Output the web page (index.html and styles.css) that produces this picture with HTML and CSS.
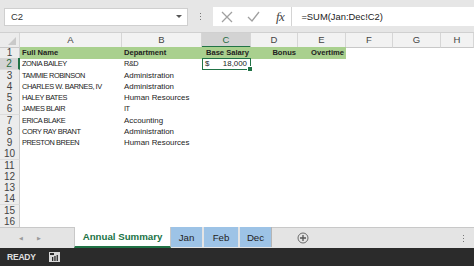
FILE: index.html
```html
<!DOCTYPE html>
<html>
<head>
<meta charset="utf-8">
<link rel="stylesheet" href="styles.css">
</head>
<body>
<div class="app">
  <div class="fbar">
    <div class="namebox"><span class="nb-text">C2</span><span class="nb-arrow"></span></div>
    <div class="vdots"><i></i><i></i><i></i></div>
    <div class="formula">
      <svg class="ic-x" width="12" height="12" viewBox="0 0 12 12"><path d="M1 1 L11 11 M11 1 L1 11" stroke="#a0a0a0" stroke-width="1.3" fill="none"/></svg>
      <svg class="ic-check" width="13" height="11" viewBox="0 0 13 11"><path d="M1 6 L5 10 L12 1" stroke="#a0a0a0" stroke-width="1.3" fill="none"/></svg>
      <span class="fx">fx</span>
      <span class="fsep"></span>
      <span class="ftext">=SUM(Jan:Dec!C2)</span>
    </div>
  </div>

  <div class="sheet">
    <div class="row head">
      <div class="corner"><span class="tri"></span></div>
      <div class="ch">A</div><div class="ch">B</div><div class="ch sel">C</div><div class="ch">D</div><div class="ch">E</div><div class="ch">F</div><div class="ch">G</div><div class="ch">H</div>
    </div>
    <div class="row">
      <div class="rh">1</div>
      <div class="c g b">Full Name</div><div class="c g b">Department</div><div class="c g b r">Base Salary</div><div class="c g b r">Bonus</div><div class="c g b r">Overtime</div>
    </div>
    <div class="row">
      <div class="rh sel">2</div>
      <div class="c n">ZONIA BAILEY</div><div class="c n">R&amp;D</div><div class="c active"><span>$</span><span>18,000</span><i class="handle"></i></div>
    </div>
    <div class="row"><div class="rh">3</div><div class="c n">TAMMIE ROBINSON</div><div class="c">Administration</div></div>
    <div class="row"><div class="rh">4</div><div class="c n">CHARLES W. BARNES, IV</div><div class="c">Administration</div></div>
    <div class="row"><div class="rh">5</div><div class="c n">HALEY BATES</div><div class="c">Human Resources</div></div>
    <div class="row"><div class="rh">6</div><div class="c n">JAMES BLAIR</div><div class="c n">IT</div></div>
    <div class="row"><div class="rh">7</div><div class="c n">ERICA BLAKE</div><div class="c">Accounting</div></div>
    <div class="row"><div class="rh">8</div><div class="c n">CORY RAY BRANT</div><div class="c">Administration</div></div>
    <div class="row"><div class="rh">9</div><div class="c n">PRESTON BREEN</div><div class="c">Human Resources</div></div>
    <div class="row"><div class="rh">10</div></div>
    <div class="row"><div class="rh">11</div></div>
    <div class="row"><div class="rh">12</div></div>
    <div class="row"><div class="rh">13</div></div>
    <div class="row"><div class="rh">14</div></div>
    <div class="row"><div class="rh">15</div></div>
    <div class="row"><div class="rh">16</div></div>
  </div>

  <div class="tabs">
    <div class="nav"><span class="arr">&#9664;</span><span class="arr">&#9654;</span></div>
    <div class="tab active">Annual Summary</div>
    <div class="tab blue">Jan</div>
    <div class="tab blue">Feb</div>
    <div class="tab blue">Dec</div>
    <div class="plus">
      <svg width="12" height="12" viewBox="0 0 12 12"><circle cx="6" cy="6" r="5" stroke="#6b6b6b" stroke-width="1" fill="none"/><path d="M6 3 V9 M3 6 H9" stroke="#555" stroke-width="1.3"/></svg>
    </div>
    <div class="spacer"></div>
    <div class="vdots small"><i></i><i></i><i></i></div>
  </div>

  <div class="status">
    <span class="ready">READY</span>
    <svg class="sicon" width="11" height="10" viewBox="0 0 11 10"><rect x="0.5" y="0.5" width="10" height="9" fill="#d9d9d9" stroke="#d9d9d9"/><rect x="1" y="1" width="4" height="2" fill="#2b2b2b"/><rect x="3" y="5" width="1.3" height="4" fill="#2b2b2b"/><rect x="5.3" y="4" width="1.3" height="5" fill="#2b2b2b"/><rect x="7.6" y="3" width="1.3" height="6" fill="#2b2b2b"/></svg>
  </div>
</div>
</body>
</html>
```

FILE: styles.css
```css
html, body { margin: 0; padding: 0; }
body {
  width: 474px;
  height: 266px;
  overflow: hidden;
  font-family: "Liberation Sans", Arial, sans-serif;
  background: #fff;
  color: #222;
}
.app { display: flex; flex-direction: column; height: 266px; }

/* formula bar */
.fbar {
  height: 33px;
  background: #e6e6e6;
  display: flex;
  align-items: center;
  padding: 0 0 0 4px;
  box-sizing: border-box;
  border-bottom: 1px solid #d0d0d0;
}
.namebox {
  width: 184px;
  height: 18px;
  background: #fff;
  border: 1px solid #cfcfcf;
  box-sizing: border-box;
  display: flex;
  align-items: center;
  justify-content: space-between;
  padding: 0 5px 0 6px;
  margin-top: 1px;
}
.nb-text { font-size: 9.5px; color: #333; }
.nb-arrow {
  width: 0; height: 0;
  border-left: 3px solid transparent;
  border-right: 3px solid transparent;
  border-top: 3px solid #555;
}
.vdots {
  width: 25px;
  display: flex;
  flex-direction: column;
  align-items: center;
  gap: 2px;
}
.vdots i { display: block; width: 1px; height: 1px; background: #777; }
.formula {
  flex: 1;
  height: 19px;
  background: #fff;
  display: flex;
  align-items: center;
  margin-top: 1px;
}
.ic-x { margin-left: 8px; }
.ic-check { margin-left: 14px; }
.fx {
  font-family: "Liberation Serif", "Times New Roman", serif;
  font-style: italic;
  font-size: 13px;
  color: #444;
  margin-left: 16px;
  letter-spacing: -0.5px;
}
.fsep { width: 1px; height: 19px; background: #d4d4d4; margin-left: 7px; }
.ftext { font-size: 9.4px; color: #222; margin-left: 9px; }

/* sheet */
.sheet { flex: 1; display: flex; flex-direction: column; }
.row {
  display: grid;
  grid-template-columns: 20px 102px 80px 49px 47px 48px 47px 48px 1fr;
  height: 11.25px;
}
.row.head { height: 14px; }
.corner, .ch {
  background: #f2f2f2;
  border-right: 1px solid #d6d6d6;
  border-bottom: 1px solid #c8c8c8;
  box-sizing: border-box;
}
.corner { position: relative; background: #ececec; }
.tri {
  position: absolute; right: 3px; bottom: 2px;
  width: 0; height: 0;
  border-left: 8px solid transparent;
  border-bottom: 8px solid #c9c9c9;
}
.ch {
  font-size: 9.5px;
  color: #444;
  text-align: center;
  line-height: 14px;
}
.ch.sel {
  background: #d3d3d3;
  color: #1e6b3f;
  border-bottom: 2px solid #217346;
  line-height: 13px;
}
.rh {
  background: #ececec;
  border-right: 1px solid #cbcbcb;
  border-bottom: 1px solid #dcdcdc;
  box-sizing: border-box;
  font-size: 10px;
  color: #444;
  text-align: center;
  line-height: 11px;
}
.rh.sel {
  background: #d3d3d3;
  color: #1e6b3f;
  border-right: 2px solid #217346;
}
.c {
  font-size: 7.9px;
  line-height: 11.25px;
  padding: 0 2px;
  white-space: nowrap;
  color: #222;
}
.c.n { font-size: 7.4px; letter-spacing: -0.45px; }
.c.g { background: #a9d08e; }
.c.b { font-weight: bold; font-size: 7.6px; }
.c.r { text-align: right; }
.c.active {
  border: 1.5px solid #217346;
  box-sizing: border-box;
  display: flex;
  justify-content: space-between;
  align-items: center;
  padding: 0 3px 0 2px;
  line-height: 1;
  position: relative;
}
.handle {
  position: absolute;
  right: -3px;
  bottom: -3px;
  width: 4px;
  height: 4px;
  background: #217346;
  border: 1px solid #fff;
}

/* tabs */
.tabs {
  height: 21px;
  background: #e4e4e4;
  border-top: 1px solid #c8c8c8;
  box-sizing: border-box;
  display: flex;
  align-items: stretch;
}
.nav {
  width: 74px;
  display: flex;
  align-items: center;
  gap: 14px;
  padding-left: 19px;
  box-sizing: border-box;
}
.arr { font-size: 5px; color: #9a9a9a; }
.tab {
  font-size: 9.7px;
  display: flex;
  align-items: center;
  justify-content: center;
  box-sizing: border-box;
  margin-top: -1px;
}
.tab.active {
  width: 97px;
  background: #fff;
  color: #217346;
  font-weight: bold;
  border-bottom: 2px solid #217346;
  border-left: 1px solid #c8c8c8;
  border-right: 1px solid #c8c8c8;
}
.tab.blue {
  background: #9dc3e6;
  color: #222;
  border-right: 2px solid #e4e4e4;
  margin-bottom: 1px;
}
.tab.blue:nth-of-type(3) { width: 33px; }
.tab.blue:nth-of-type(4) { width: 36px; }
.tab.blue:nth-of-type(5) { width: 32px; border-right: 1px solid #b5b5b5; }
.plus { display: flex; align-items: center; margin-left: 25px; }
.spacer { flex: 1; }
.vdots.small { width: 22px; justify-content: center; }

/* status */
.status {
  height: 18px;
  background: #2b2b2b;
  display: flex;
  align-items: center;
  padding-left: 7px;
}
.ready { font-size: 8.5px; font-weight: bold; color: #e0e0e0; letter-spacing: -0.2px; }
.sicon { margin-left: 13px; }
```
